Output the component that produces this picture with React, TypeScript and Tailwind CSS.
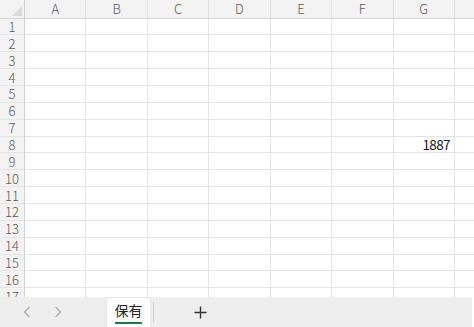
import React from "react";

const cols = ["A", "B", "C", "D", "E", "F", "G", ""];
const rows = Array.from({ length: 17 }, (_, i) => i + 1);

export default function App() {
  return (
    <div
      className="w-[474px] h-[327px] bg-white overflow-hidden flex flex-col"
      style={{ fontFamily: '"Noto Sans CJK JP", "Noto Sans", sans-serif' }}
    >
      <div className="h-[297px] overflow-hidden shrink-0">
        {/* header row */}
        <div className="flex h-[18.5px] bg-[#f3f3f3] border-b border-[#d6d6d6]">
          <div className="w-[25px] shrink-0 border-r border-[#d0d0d0] relative">
            <svg className="absolute right-[2px] bottom-[2px]" width="10" height="10" viewBox="0 0 10 10">
              <polygon points="10,0 10,10 0,10" fill="#d9d9d9" />
            </svg>
          </div>
          {cols.map((c, i) => (
            <div
              key={i}
              className="w-[61.43px] shrink-0 border-r border-[#e0e0e0] flex items-center justify-center text-[13px] font-light text-[#5a5a5a] leading-none"
            >
              {c}
            </div>
          ))}
        </div>
        {rows.map((r) => (
          <div key={r} className="flex h-[16.86px]">
            <div className="w-[25px] shrink-0 bg-[#f3f3f3] border-r border-[#d0d0d0] border-b border-b-[#e4e4e4] flex items-center justify-center text-[13px] font-light text-[#5a5a5a] leading-none">
              {r}
            </div>
            {cols.map((_, i) => (
              <div
                key={i}
                className="w-[61.43px] shrink-0 border-r border-b border-[#e4e4e4] flex items-center justify-end pr-[4px] text-[13.5px] tracking-[-0.6px] text-[#222] leading-none"
              >
                {r === 8 && i === 6 ? "1887" : ""}
              </div>
            ))}
          </div>
        ))}
      </div>
      <div className="flex-1 flex items-stretch bg-[#eeeeee] mr-[2px]">
        <div className="w-[107px] shrink-0 flex items-center">
          <svg className="ml-[23px]" width="8" height="12" viewBox="0 0 8 12">
            <path d="M6.5 1 L1.5 6 L6.5 11" fill="none" stroke="#aaaaaa" strokeWidth="1.2" />
          </svg>
          <svg className="ml-[23px]" width="8" height="12" viewBox="0 0 8 12">
            <path d="M1.5 1 L6.5 6 L1.5 11" fill="none" stroke="#aaaaaa" strokeWidth="1.2" />
          </svg>
        </div>
        <div className="w-[43px] shrink-0 bg-white rounded-t-[4px] mt-[1px] shadow-[0_0_2px_rgba(0,0,0,0.12)] flex flex-col items-center justify-center">
          <span className="text-[14px] leading-none text-[#222] mt-[2px]">保有</span>
          <div className="w-[27px] h-[2px] bg-[#1d7a48] mt-[5px]" />
        </div>
        <div className="w-[1px] h-[20px] bg-[#cfcfcf] ml-[3px] self-center" />
        <div className="w-[92px] flex items-center justify-center">
          <svg width="13" height="13" viewBox="0 0 13 13">
            <path d="M6.5 0.5 V12.5 M0.5 6.5 H12.5" stroke="#333333" strokeWidth="1.4" />
          </svg>
        </div>
      </div>
    </div>
  );
}
